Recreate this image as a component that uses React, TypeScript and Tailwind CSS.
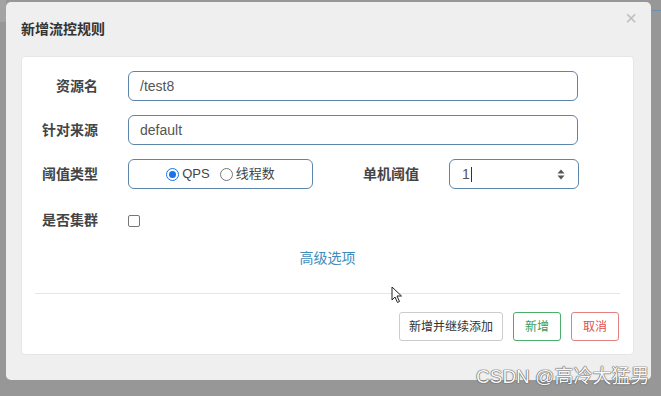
const cjk = { fontFamily: '"Liberation Sans", "Noto Sans CJK SC", sans-serif' };

function Label({ children, className = "" }: { children: string; className?: string }) {
  return (
    <div className={`text-right text-[14px] font-bold text-[#444] ${className}`}>{children}</div>
  );
}

function Radio({ checked, label }: { checked?: boolean; label: string }) {
  return (
    <span className="flex items-center gap-[3px]">
      <span
        className={`flex h-[13px] w-[13px] items-center justify-center rounded-full border ${
          checked ? "border-[#1a73e8]" : "border-[#777]"
        } bg-white`}
      >
        {checked && <span className="h-[7px] w-[7px] rounded-full bg-[#1a73e8]" />}
      </span>
      <span className="text-[13px] text-[#444]">{label}</span>
    </span>
  );
}

export default function App() {
  return (
    <div className="relative h-[396px] w-[661px] overflow-hidden bg-[#979797]" style={cjk}>
      {/* backdrop hints */}
      <div className="absolute left-0 top-0 h-[22px] w-[6px] bg-[#a3a3a3]" />
      <div className="absolute right-0 top-[10px] h-px w-[10px] bg-[#6d8fb0]" />

      {/* modal */}
      <div className="absolute left-[6px] top-[2px] flex h-[378px] w-[645px] flex-col rounded-[5px] bg-[#efefef] px-[15px] pr-[17px]">
        <div className="flex h-[54px] items-center justify-between">
          <div className="text-[14px] font-bold text-[#333]">新增流控规则</div>
          <div className="mb-[22px] mr-[-3px] text-[20px] leading-none text-[#bdbdbd]">×</div>
        </div>

        <div className="flex h-[299px] flex-col rounded-[4px] border border-[#e6e6e6] bg-white pt-[14px]">
          <div className="flex flex-col gap-[14px]">
            <div className="flex items-center gap-[30px]">
              <Label className="w-[76px]">资源名</Label>
              <div className="flex h-[30px] w-[450px] items-center rounded-[6px] border border-[#5d86ad] px-[11px] text-[14px] text-[#555]">
                /test8
              </div>
            </div>
            <div className="flex items-center gap-[30px]">
              <Label className="w-[76px]">针对来源</Label>
              <div className="flex h-[30px] w-[450px] items-center rounded-[6px] border border-[#5d86ad] px-[11px] text-[14px] text-[#555]">
                default
              </div>
            </div>
            <div className="flex items-center">
              <Label className="w-[76px]">阈值类型</Label>
              <div className="ml-[30px] flex h-[30px] w-[185px] items-center justify-center gap-[10px] rounded-[6px] border border-[#5d86ad]">
                <Radio checked label="QPS" />
                <Radio label="线程数" />
              </div>
              <Label className="w-[106px]">单机阈值</Label>
              <div className="ml-[30px] flex h-[30px] w-[130px] items-center justify-between rounded-[6px] border border-[#5d86ad] pl-[12px] pr-[13px] text-[14px] text-[#555]">
                <span className="flex items-center">
                  1<span className="ml-[1px] h-[15px] w-px bg-[#333]" />
                </span>
                <svg width="8" height="11" viewBox="0 0 8 11">
                  <path d="M4 0.5 L7.5 4.5 H0.5 Z" fill="#555" />
                  <path d="M4 10.5 L7.5 6.5 H0.5 Z" fill="#555" />
                </svg>
              </div>
            </div>
            <div className="mt-[7px] flex items-center gap-[30px]">
              <Label className="w-[76px]">是否集群</Label>
              <span className="h-[12px] w-[12px] rounded-[2px] border border-[#767676] bg-white" />
            </div>
          </div>

          <div className="mt-[17px] text-center text-[14px] text-[#3c8dbc]">高级选项</div>

          <div className="mx-[13px] mt-[24px] h-px bg-[#e5e5e5]" />

          <div className="mt-[18px] flex justify-end gap-[10px] pr-[14px] text-[12px]">
            <div className="flex h-[29px] items-center rounded-[3px] border border-[#ccc] bg-white px-[9px] text-[#333]">
              新增并继续添加
            </div>
            <div className="flex h-[29px] items-center rounded-[3px] border border-[#4cae6c] bg-white px-[11px] text-[#3a9d5d]">
              新增
            </div>
            <div className="flex h-[29px] items-center rounded-[3px] border border-[#e08080] bg-white px-[11px] text-[#d9534f]">
              取消
            </div>
          </div>
        </div>
      </div>

      {/* mouse cursor */}
      <svg className="absolute left-[391px] top-[286px]" width="12" height="18" viewBox="0 0 12 18">
        <path d="M1 1 L1 14 L4 11 L6.5 16.5 L8.5 15.5 L6 10 L10.5 10 Z" fill="white" stroke="#222" strokeWidth="1" strokeLinejoin="round" />
      </svg>

      {/* watermark */}
      <div
        className="absolute left-[476px] top-[367px] text-[19px] leading-none text-[#f7f7f7]"
        style={{ textShadow: "0 0 1px #555, 0 0 1px #555, 0 0 1px #555" }}
      >
        CSDN @高冷大猛男
      </div>
    </div>
  );
}
